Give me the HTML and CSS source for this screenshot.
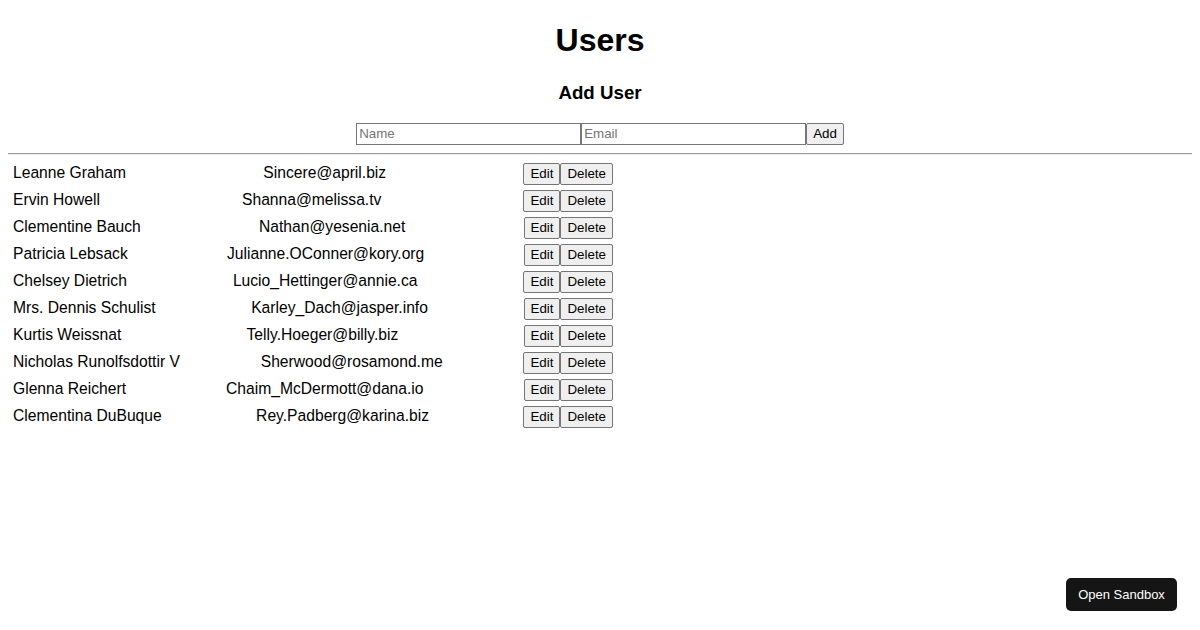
FILE: index.html
```html
<!DOCTYPE html>
<html>
<head>
<meta charset="utf-8">
<link rel="stylesheet" href="styles.css">
</head>
<body>
<h1 class="title">Users</h1>
<h3 class="subtitle">Add User</h3>
<div class="add-form"><input class="field" placeholder="Name"><input class="field" placeholder="Email"><button class="btn">Add</button></div>
<hr class="divider">
<div class="user-list">
<div class="user-row"><span class="user-name">Leanne Graham</span><span class="user-email">Sincere@april.biz</span><span class="actions"><button class="btn">Edit</button><button class="btn">Delete</button></span></div>
<div class="user-row"><span class="user-name">Ervin Howell</span><span class="user-email">Shanna@melissa.tv</span><span class="actions"><button class="btn">Edit</button><button class="btn">Delete</button></span></div>
<div class="user-row"><span class="user-name">Clementine Bauch</span><span class="user-email">Nathan@yesenia.net</span><span class="actions"><button class="btn">Edit</button><button class="btn">Delete</button></span></div>
<div class="user-row"><span class="user-name">Patricia Lebsack</span><span class="user-email">Julianne.OConner@kory.org</span><span class="actions"><button class="btn">Edit</button><button class="btn">Delete</button></span></div>
<div class="user-row"><span class="user-name">Chelsey Dietrich</span><span class="user-email">Lucio_Hettinger@annie.ca</span><span class="actions"><button class="btn">Edit</button><button class="btn">Delete</button></span></div>
<div class="user-row"><span class="user-name">Mrs. Dennis Schulist</span><span class="user-email">Karley_Dach@jasper.info</span><span class="actions"><button class="btn">Edit</button><button class="btn">Delete</button></span></div>
<div class="user-row"><span class="user-name">Kurtis Weissnat</span><span class="user-email">Telly.Hoeger@billy.biz</span><span class="actions"><button class="btn">Edit</button><button class="btn">Delete</button></span></div>
<div class="user-row"><span class="user-name">Nicholas Runolfsdottir V</span><span class="user-email">Sherwood@rosamond.me</span><span class="actions"><button class="btn">Edit</button><button class="btn">Delete</button></span></div>
<div class="user-row"><span class="user-name">Glenna Reichert</span><span class="user-email">Chaim_McDermott@dana.io</span><span class="actions"><button class="btn">Edit</button><button class="btn">Delete</button></span></div>
<div class="user-row"><span class="user-name">Clementina DuBuque</span><span class="user-email">Rey.Padberg@karina.biz</span><span class="actions"><button class="btn">Edit</button><button class="btn">Delete</button></span></div>
</div>
<button class="sandbox-btn">Open Sandbox</button>
</body>
</html>
```

FILE: styles.css
```css
body {
  margin: 8px;
  font-family: "Liberation Sans", Arial, sans-serif;
  font-size: 16px;
  color: #000;
  background: #fff;
}
.title {
  text-align: center;
  font-size: 32px;
  margin: 13.5px 0 23.44px;
}
.subtitle {
  text-align: center;
  font-size: 18.72px;
  margin: 18.72px 0;
}
.add-form {
  text-align: center;
}
.field {
  box-sizing: border-box;
  width: 225px;
  height: 22px;
  font-family: "Liberation Sans", Arial, sans-serif;
  font-size: 13.33px;
  padding: 1px 2px;
  border: 1px solid #767676;
  border-radius: 0;
  margin: 0;
  vertical-align: middle;
}
.field::placeholder {
  color: #757575;
}
.btn {
  box-sizing: border-box;
  height: 22px;
  font-family: "Liberation Sans", Arial, sans-serif;
  font-size: 13.33px;
  padding: 1px 6px;
  margin: 0;
  background: #efefef;
  border: 1px solid #767676;
  border-radius: 2px;
  color: #000;
  vertical-align: middle;
}
.btn-wide {
  padding: 1px 6.5px;
}
.divider {
  margin: 8px 0;
  border: 0;
  border-top: 1px solid #9a9a9a;
  border-bottom: 1px solid #eee;
}
.user-list {
  display: flex;
  flex-direction: column;
  gap: 5px;
  padding: 0 5px;
}
.user-row {
  display: flex;
  justify-content: space-between;
  align-items: flex-start;
  width: 600px;
  height: 22px;
}
.user-name, .user-email {
  font-size: 15.65px;
  line-height: 20px;
}
.actions {
  display: flex;
}
.sandbox-btn {
  position: fixed;
  right: 23px;
  bottom: 19px;
  width: 111px;
  height: 33px;
  background: #151515;
  color: #fff;
  border: none;
  border-radius: 5px;
  font-family: "Liberation Sans", Arial, sans-serif;
  font-size: 13px;
  padding: 0;
}
```
